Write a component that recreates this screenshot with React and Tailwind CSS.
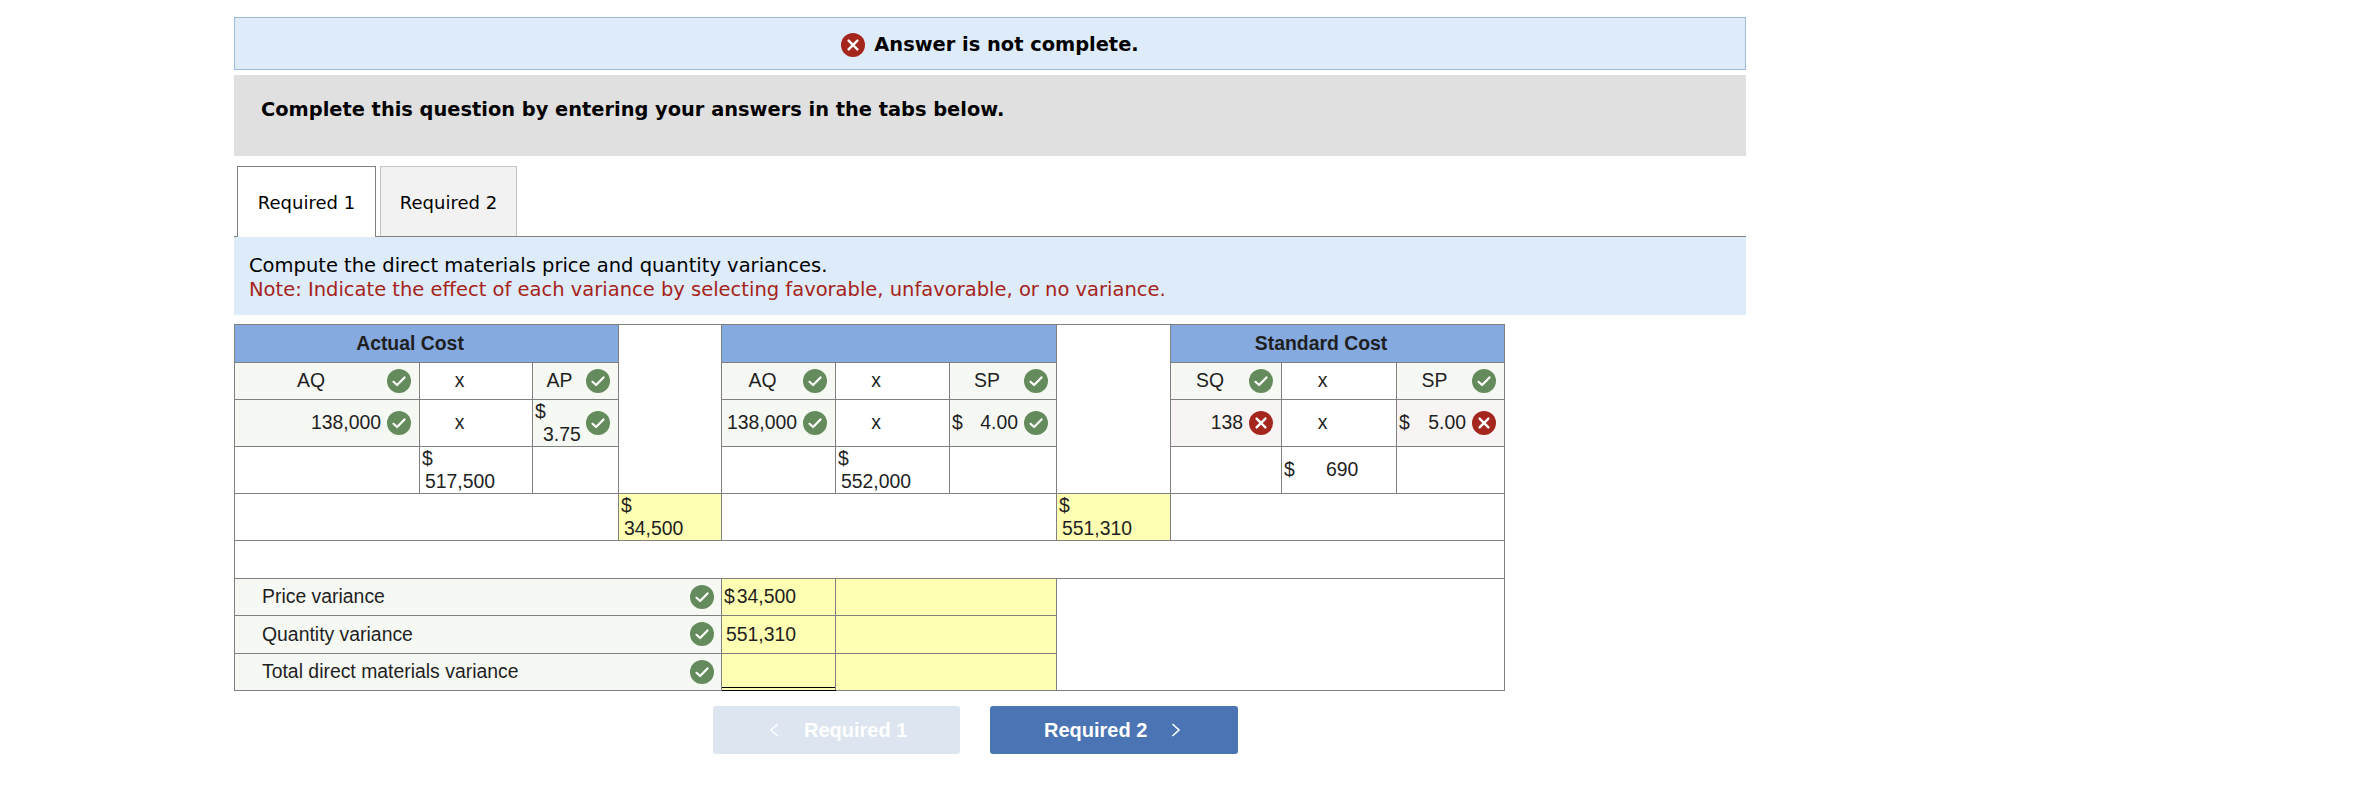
import React from 'react'

function Check({ className = '' }) {
  return (
    <svg viewBox="0 0 24 24" className={'w-[24px] h-[24px] shrink-0 ' + className}>
      <circle cx="12" cy="12" r="12" fill="#648b5b" />
      <path d="M6.5 12.8l3.6 3.2 7.4-7.6" fill="none" stroke="#fff" strokeWidth="2.2" strokeLinecap="round" strokeLinejoin="round" />
    </svg>
  )
}

function Cross({ className = '' }) {
  return (
    <svg viewBox="0 0 24 24" className={'w-[24px] h-[24px] shrink-0 ' + className}>
      <circle cx="12" cy="12" r="12" fill="#a5261d" />
      <path d="M7.6 7.6l8.8 8.8M16.4 7.6l-8.8 8.8" fill="none" stroke="#fff" strokeWidth="2.4" strokeLinecap="round" />
    </svg>
  )
}

function LabelCell({ children, bad }) {
  return (
    <td className={'p-0 border border-[#808080] ' + (bad ? 'bg-[#f9f4f4]' : 'bg-[#f6f8f3]')}>
      <div className="flex items-center h-full">
        <span className="flex-1 text-center">{children}</span>
        <Check className="mr-[8px]" />
      </div>
    </td>
  )
}

function ValueCell({ value, bad }) {
  return (
    <td className={'p-0 border border-[#808080] ' + (bad ? 'bg-[#f9f4f4]' : 'bg-[#f6f8f3]')}>
      <div className="flex items-center justify-end h-full">
        <span className="mr-[6px]">{value}</span>
        {bad ? <Cross className="mr-[8px]" /> : <Check className="mr-[8px]" />}
      </div>
    </td>
  )
}

function TimesCell() {
  return <td className="p-0 pr-[33px] border border-[#808080] text-center">x</td>
}

function StackedMoney({ value, yellow, indent = 'pl-[5px]', topBlack }) {
  return (
    <td className={'p-0 border border-[#808080] align-top ' + (yellow ? 'bg-[#ffffb3]' : '') + (topBlack ? ' border-t-black' : '')}>
      <div className="pl-[2px] leading-[23px]">$</div>
      <div className={'leading-[23px] ' + indent}>{value}</div>
    </td>
  )
}

function InlineMoney({ value, bad, dollarPad = 'pl-[2px]' }) {
  return (
    <td className={'p-0 border border-[#808080] ' + (bad ? 'bg-[#f9f4f4]' : 'bg-[#f6f8f3]')}>
      <div className="flex items-center h-full">
        <span className={'flex-1 ' + dollarPad}>$</span>
        <span className="mr-[6px]">{value}</span>
        {bad ? <Cross className="mr-[8px]" /> : <Check className="mr-[8px]" />}
      </div>
    </td>
  )
}

function VarianceRow({ label, amount, dollar, topBlack, bottomDouble, rowHeight, children }) {
  return (
    <tr className={rowHeight}>
      <td colSpan={4} className="p-0 border border-[#808080] bg-[#f6f8f3]">
        <div className="flex items-center h-full pl-[27px]">
          <span className="flex-1">{label}</span>
          <Check className="mr-[7px]" />
        </div>
      </td>
      <td className={'p-0 border border-[#808080] bg-[#ffffb3] relative ' + (topBlack ? 'border-t-black ' : '') + (bottomDouble ? 'border-b-black' : '')}>
        <div className="flex items-center h-full pl-[2px] pr-[39px]">
          <span className="flex-1">{dollar ? '$' : ''}</span>
          <span>{amount}</span>
        </div>
        {bottomDouble && <div className="absolute left-0 right-0 bottom-[2px] h-px bg-black"></div>}
      </td>
      <td colSpan={2} className="p-0 border border-[#808080] bg-[#ffffb3]"></td>
      {children}
    </tr>
  )
}

export default function App() {
  return (
    <div className="min-h-[804px] bg-white pt-[17px] pl-[234px] w-[1746px] box-content font-['DejaVu_Sans',Verdana,sans-serif] text-black">
      <div className="w-[1512px] h-[53px] bg-[#deebf8] border border-[#9dbbdd] flex items-center justify-center gap-[9px] pt-[3px]">
        <Cross />
        <span className="font-bold text-[19.4px]">Answer is not complete.</span>
      </div>

      <div className="w-[1512px] h-[81px] mt-[5px] bg-[#e0e0e0] pl-[27px] pt-[21px] font-bold text-[19.4px] leading-[28px]">
        Complete this question by entering your answers in the tabs below.
      </div>

      <div className="flex w-[1512px] mt-[10px] pl-[3px] gap-[4px] h-[71px] border-b border-[#808080] text-[18px]">
        <div className="w-[139px] h-[71px] bg-white border border-b-0 border-[#808080] flex items-center justify-center pt-[1px] relative z-10">
          Required 1
        </div>
        <div className="w-[137px] h-[70px] bg-[#f2f2f2] border border-b-0 border-[#c4c4c4] flex items-center justify-center pt-[1px]">
          Required 2
        </div>
      </div>

      <div className="w-[1512px] h-[78px] bg-[#deebf8] pl-[15px] pt-[17px] text-[19.5px] leading-[24px]">
        <div>Compute the direct materials price and quantity variances.</div>
        <div className="text-[#a5231b]">Note: Indicate the effect of each variance by selecting favorable, unfavorable, or no variance.</div>
      </div>

      <table className="mt-[9px] w-[1270px] table-fixed font-['Liberation_Sans',Arial,sans-serif] text-[19.4px] text-[#1f1f1f]">
        <colgroup>
          <col className="w-[185px]" />
          <col className="w-[113px]" />
          <col className="w-[86px]" />
          <col className="w-[103px]" />
          <col className="w-[114px]" />
          <col className="w-[114px]" />
          <col className="w-[107px]" />
          <col className="w-[114px]" />
          <col className="w-[111px]" />
          <col className="w-[115px]" />
          <col className="w-[108px]" />
        </colgroup>
        <tbody>
          <tr className="h-[38px]">
            <td colSpan={3} className="p-0 pr-[33px] border border-[#808080] bg-[#84aadf] text-center font-bold">Actual Cost</td>
            <td rowSpan={4} className="p-0 border border-[#808080]"></td>
            <td colSpan={3} className="p-0 border border-[#808080] bg-[#84aadf]"></td>
            <td rowSpan={4} className="p-0 border border-[#808080]"></td>
            <td colSpan={3} className="p-0 pr-[33px] border border-[#808080] bg-[#84aadf] text-center font-bold">Standard Cost</td>
          </tr>
          <tr className="h-[37px]">
            <LabelCell>AQ</LabelCell>
            <TimesCell />
            <LabelCell>AP</LabelCell>
            <LabelCell>AQ</LabelCell>
            <TimesCell />
            <LabelCell>SP</LabelCell>
            <LabelCell>SQ</LabelCell>
            <TimesCell />
            <LabelCell>SP</LabelCell>
          </tr>
          <tr className="h-[47px]">
            <ValueCell value="138,000" />
            <TimesCell />
            <td className="p-0 border border-[#808080] bg-[#f6f8f3]">
              <div className="flex items-center">
                <div className="flex-1">
                  <div className="pl-[2px] leading-[23px]">$</div>
                  <div className="pl-[10px] leading-[23px]">3.75</div>
                </div>
                <Check className="mr-[8px]" />
              </div>
            </td>
            <ValueCell value="138,000" />
            <TimesCell />
            <InlineMoney value="4.00" />
            <ValueCell value="138" bad />
            <TimesCell />
            <InlineMoney value="5.00" bad />
          </tr>
          <tr className="h-[47px]">
            <td className="p-0 border border-[#808080]"></td>
            <StackedMoney value="517,500" topBlack />
            <td className="p-0 border border-[#808080]"></td>
            <td className="p-0 border border-[#808080]"></td>
            <StackedMoney value="552,000" topBlack />
            <td className="p-0 border border-[#808080]"></td>
            <td className="p-0 border border-[#808080]"></td>
            <td className="p-0 border border-[#808080]">
              <div className="flex pl-[2px]">
                <span className="w-[42px]">$</span>
                <span>690</span>
              </div>
            </td>
            <td className="p-0 border border-[#808080]"></td>
          </tr>
          <tr className="h-[47px]">
            <td colSpan={3} className="p-0 border border-[#808080]"></td>
            <StackedMoney value="34,500" yellow />
            <td colSpan={3} className="p-0 border border-[#808080]"></td>
            <StackedMoney value="551,310" yellow />
            <td colSpan={3} className="p-0 border border-[#808080]"></td>
          </tr>
          <tr className="h-[38px]">
            <td colSpan={11} className="p-0 border border-[#808080]"></td>
          </tr>
          <VarianceRow label="Price variance" amount="34,500" dollar rowHeight="h-[37px]">
            <td colSpan={4} rowSpan={3} className="p-0 border border-[#808080]"></td>
          </VarianceRow>
          <VarianceRow label="Quantity variance" amount="551,310" rowHeight="h-[38px]" />
          <VarianceRow label="Total direct materials variance" amount="" topBlack bottomDouble rowHeight="h-[37px]" />
        </tbody>
      </table>

      <div className="flex gap-[30px] ml-[479px] mt-[15px] font-['Liberation_Sans',Arial,sans-serif] font-bold text-[20px] text-white">
        <button className="w-[247px] h-[48px] rounded-[3px] bg-[#dce5f0] flex items-center pl-[56px] gap-[25px] font-bold">
          <svg viewBox="0 0 10 14" className="w-[10px] h-[14px]">
            <path d="M8.5 1L2 7l6.5 6" fill="none" stroke="#fff" strokeWidth="1.6" />
          </svg>
          Required 1
        </button>
        <button className="w-[248px] h-[48px] rounded-[3px] bg-[#4a74b4] flex items-center pl-[54px] gap-[24px] font-bold">
          Required 2
          <svg viewBox="0 0 10 14" className="w-[10px] h-[14px]">
            <path d="M1.5 1L8 7l-6.5 6" fill="none" stroke="#fff" strokeWidth="1.6" />
          </svg>
        </button>
      </div>
    </div>
  )
}
